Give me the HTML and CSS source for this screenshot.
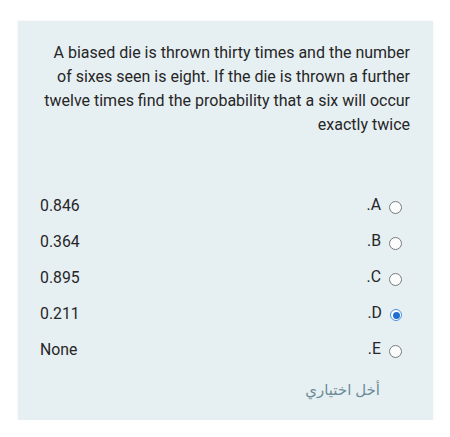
FILE: index.html
```html
<!DOCTYPE html>
<html>
<head>
<meta charset="utf-8">
<link rel="stylesheet" href="styles.css">
</head>
<body>
<div class="card">
  <p class="question">A biased die is thrown thirty times and the number of sixes seen is eight. If the die is thrown a further twelve times find the probability that a six will occur exactly twice</p>
  <div class="options">
    <div class="row"><span class="ans">0.846</span><span class="pick"><span class="lbl">.A</span><span class="radio"></span></span></div>
    <div class="row"><span class="ans">0.364</span><span class="pick"><span class="lbl">.B</span><span class="radio"></span></span></div>
    <div class="row"><span class="ans">0.895</span><span class="pick"><span class="lbl">.C</span><span class="radio"></span></span></div>
    <div class="row"><span class="ans">0.211</span><span class="pick"><span class="lbl">.D</span><span class="radio on"></span></span></div>
    <div class="row"><span class="ans">None</span><span class="pick"><span class="lbl">.E</span><span class="radio"></span></span></div>
  </div>
  <div class="clear">أخل اختياري</div>
</div>
</body>
</html>
```
FILE: styles.css
```css
html, body { margin: 0; padding: 0; background: #ffffff; }
body { font-family: Roboto, "Noto Sans", sans-serif; color: #262626; }
.card {
  margin: 21px 0 0 18px;
  width: 415px;
  height: 399px;
  box-sizing: border-box;
  background: #e6f0f3;
  box-shadow: 0 0 3px rgba(0,0,0,0.06);
  padding: 20px 23px 0 22px;
}
.question {
  margin: 0;
  text-align: right;
  font-size: 16px;
  line-height: 24px;
  padding-left: 3px;
}
.options { margin-top: 50px; }
.row {
  display: flex;
  justify-content: space-between;
  align-items: center;
  height: 36px;
  font-size: 15.8px;
}
.ans { padding-top: 1px; }
.pick { display: flex; align-items: center; gap: 8px; padding-right: 8px; }
.lbl { line-height: 1; }
.radio {
  width: 11px; height: 11px;
  border: 1px solid #7a7a7a;
  border-radius: 50%;
  background: #fbfdfd;
  margin-top: 4px;
  position: relative;
}
.radio.on {
  border: 1.5px solid #4a8fe0;
  width: 10px; height: 10px;
  background: #ffffff;
}
.radio.on::after {
  content: "";
  position: absolute;
  left: 1.5px; top: 1.5px;
  width: 7px; height: 7px;
  border-radius: 50%;
  background: #1f6fd0;
}
.clear {
  direction: rtl;
  text-align: right;
  padding-right: 30px;
  margin-top: 12px;
  font-family: "Noto Sans", "DejaVu Sans", sans-serif;
  font-size: 15px;
  color: #6f8c98;
}
```
